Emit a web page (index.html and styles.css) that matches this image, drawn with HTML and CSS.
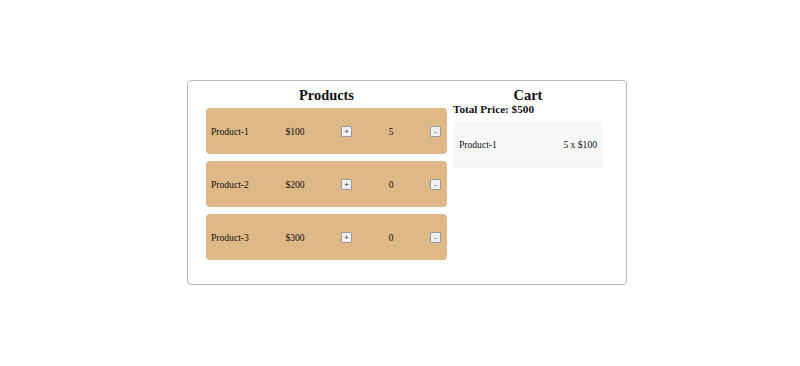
FILE: index.html
```html
<!DOCTYPE html>
<html lang="en">
<head>
    <meta charset="UTF-8">
    <meta name="viewport" content="width=device-width, initial-scale=1.0">
    <title>Shop</title>
    <link rel="stylesheet" href="styles.css">
</head>
<body>
    <div class="shop">
        <div class="products">
            <h2 class="title">Products</h2>
            <div class="product">
                <span>Product-1</span>
                <span>$100</span>
                <button class="btn">+</button>
                <span>5</span>
                <button class="btn">-</button>
            </div>
            <div class="product">
                <span>Product-2</span>
                <span>$200</span>
                <button class="btn">+</button>
                <span>0</span>
                <button class="btn">-</button>
            </div>
            <div class="product">
                <span>Product-3</span>
                <span>$300</span>
                <button class="btn">+</button>
                <span>0</span>
                <button class="btn">-</button>
            </div>
        </div>

        <div class="cart">
            <h2 class="title">Cart</h2>
            <h3 class="total">Total Price: $500</h3>
            <div class="cart-item">
                <span>Product-1</span>
                <span>5 x $100</span>
            </div>
        </div>
    </div>
</body>
</html>
```

FILE: styles.css
```css
body {
    margin: 0;
    font-family: "Liberation Serif", "Times New Roman", serif;
    font-size: 9.6px;
    color: #111;
    background-color: #fff;
}
.shop {
    box-sizing: border-box;
    width: 440px;
    height: 205px;
    margin: 80px 0 0 187px;
    padding: 6px 0 0 18px;
    border: 1px solid #bbb;
    border-radius: 4px;
    display: flex;
    gap: 6px;
}
.title {
    margin: 0 0 4px;
    font-size: 14.4px;
    line-height: 17px;
    text-align: center;
}
.products {
    width: 241px;
}
.product {
    height: 46px;
    margin-bottom: 7px;
    padding: 0 6px 0 5px;
    background-color: #deb887;
    border-radius: 4px;
    display: flex;
    align-items: center;
    justify-content: space-between;
}
.btn {
    box-sizing: border-box;
    width: 11px;
    height: 11px;
    padding: 0;
    font-family: "Liberation Sans", Arial, sans-serif;
    font-size: 7px;
    line-height: 9px;
    background-color: #efefef;
    border: 1px solid #9a9a9a;
    border-radius: 1px;
    color: #222;
}
.cart {
    width: 150px;
}
.cart .title {
    margin-bottom: 0;
}
.total {
    margin: -1px 0 5px;
    font-size: 11.2px;
    line-height: 13px;
}
.cart-item {
    height: 46px;
    padding: 0 6px;
    background-color: #f7f7f7;
    border-radius: 3px;
    box-shadow: 0 1px 1px rgba(0, 0, 0, 0.06);
    display: flex;
    align-items: center;
    justify-content: space-between;
}
```
